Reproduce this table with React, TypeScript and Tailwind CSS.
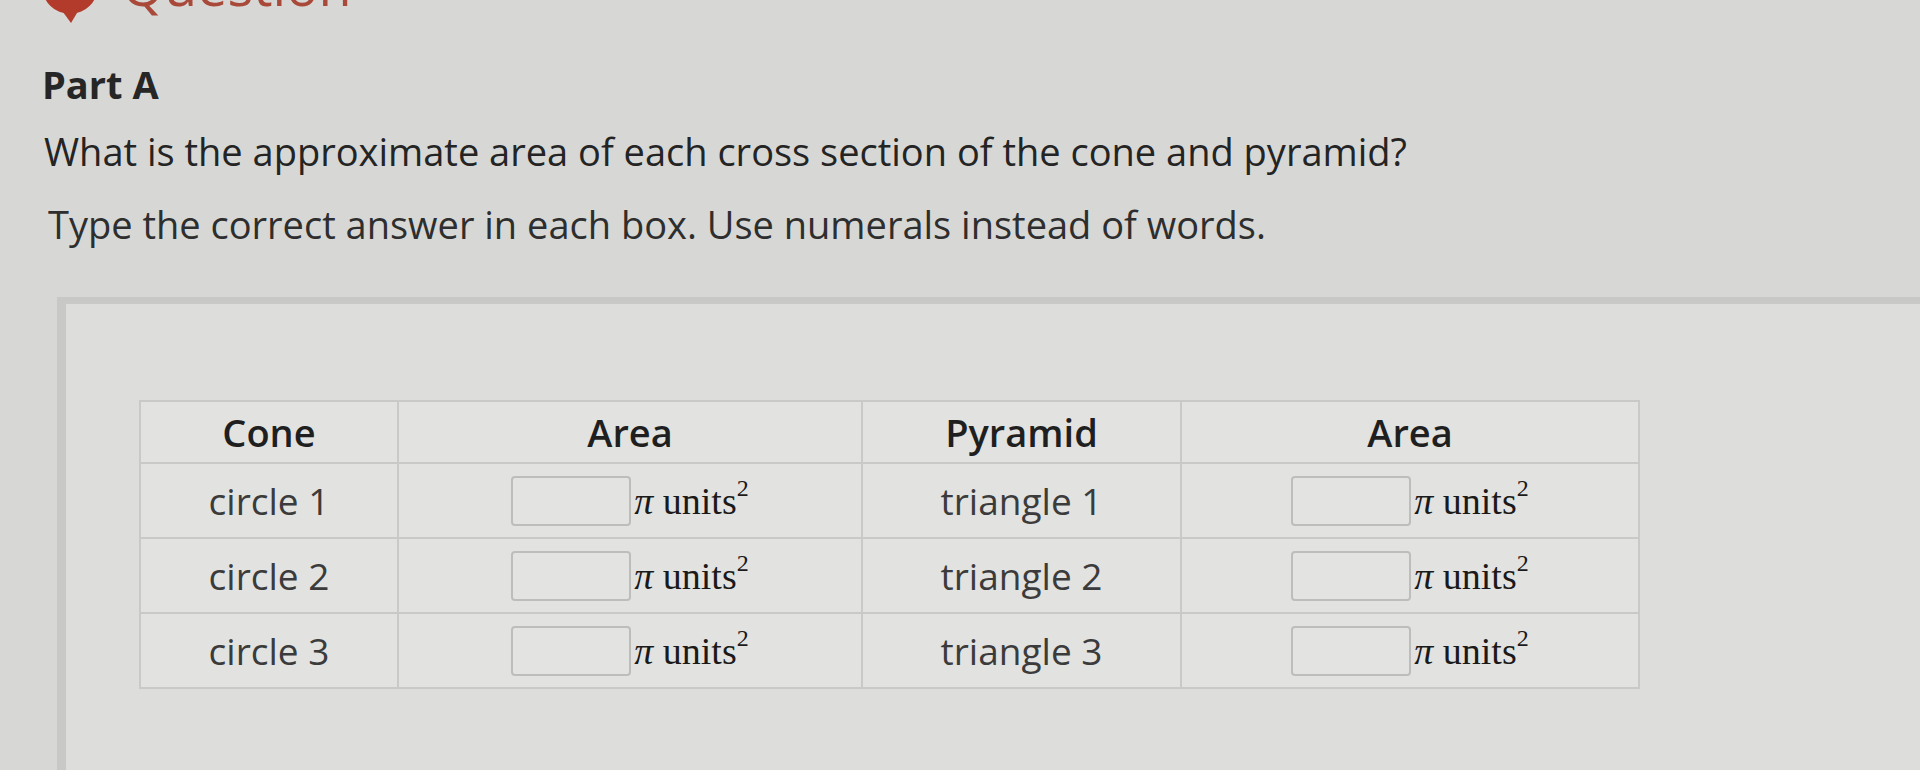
const rows = [
  { cone: "circle 1", pyramid: "triangle 1" },
  { cone: "circle 2", pyramid: "triangle 2" },
  { cone: "circle 3", pyramid: "triangle 3" },
];

const AnswerBox = () => (
  <div className="flex items-center justify-center">
    <input
      type="text"
      className="h-[50px] w-[120px] rounded-[4px] border-[2px] border-[#bdbebc] bg-[#e3e4e2] outline-none"
    />
    <span className="ml-[3px] font-['Liberation_Serif',serif] text-[38px] leading-none text-[#1a1a1a]">
      <span className="italic">π</span> units
      <sup className="top-[-0.75em] text-[24px]">2</sup>
    </span>
  </div>
);

export default function App() {
  return (
    <div className="flex h-[770px] w-full flex-col overflow-hidden bg-[#d7d8d6] font-['Open_Sans',sans-serif]">
      <header className="flex h-[24px] items-end pl-[40px]">
        <svg width="60" height="60" viewBox="0 0 60 60" className="shrink-0">
          <circle cx="30" cy="22" r="28" fill="#b23b2c" />
          <polygon points="20,44 40,44 31,59" fill="#b23b2c" />
          <rect x="27" y="30" width="6" height="5" rx="2" fill="#efe3df" />
        </svg>
        <span className="mb-[12px] ml-[22px] text-[54px] leading-none text-[#a9493a]">
          Question
        </span>
      </header>

      <h2 className="ml-[42px] mt-[36px] text-[38px] font-bold leading-[48px] text-[#262626]">
        Part A
      </h2>
      <p className="ml-[44px] mt-[19px] text-[38px] leading-[48px] text-[#242424]">
        What is the approximate area of each cross section of the cone and pyramid?
      </p>
      <p className="ml-[48px] mt-[25px] text-[38px] leading-[48px] text-[#2e2e2e]">
        Type the correct answer in each box. Use numerals instead of words.
      </p>

      <div className="ml-[57px] mt-[49px] flex-1 border-l-[9px] border-t-[7px] border-[#c8c9c6] bg-[#dddedc] pl-[73px] pt-[96px]">
        <table className="w-[1499px] table-fixed border-collapse bg-[#e2e3e1]">
          <colgroup>
            <col className="w-[258px]" />
            <col className="w-[464px]" />
            <col className="w-[319px]" />
            <col className="w-[458px]" />
          </colgroup>
          <thead>
            <tr className="h-[62px]">
              {["Cone", "Area", "Pyramid", "Area"].map((h, i) => (
                <th
                  key={i}
                  className="border-[2px] border-[#c9cac8] text-center text-[38px] font-semibold text-[#1f1f1f]"
                >
                  {h}
                </th>
              ))}
            </tr>
          </thead>
          <tbody>
            {rows.map((row, index) => (
              <tr key={index} className="h-[75px]">
                <td className="border-[2px] border-[#c9cac8] text-center text-[37px] text-[#3b3b3b]">
                  {row.cone}
                </td>
                <td className="border-[2px] border-[#c9cac8]">
                  <AnswerBox />
                </td>
                <td className="border-[2px] border-[#c9cac8] text-center text-[37px] text-[#3b3b3b]">
                  {row.pyramid}
                </td>
                <td className="border-[2px] border-[#c9cac8]">
                  <AnswerBox />
                </td>
              </tr>
            ))}
          </tbody>
        </table>
      </div>
    </div>
  );
}
